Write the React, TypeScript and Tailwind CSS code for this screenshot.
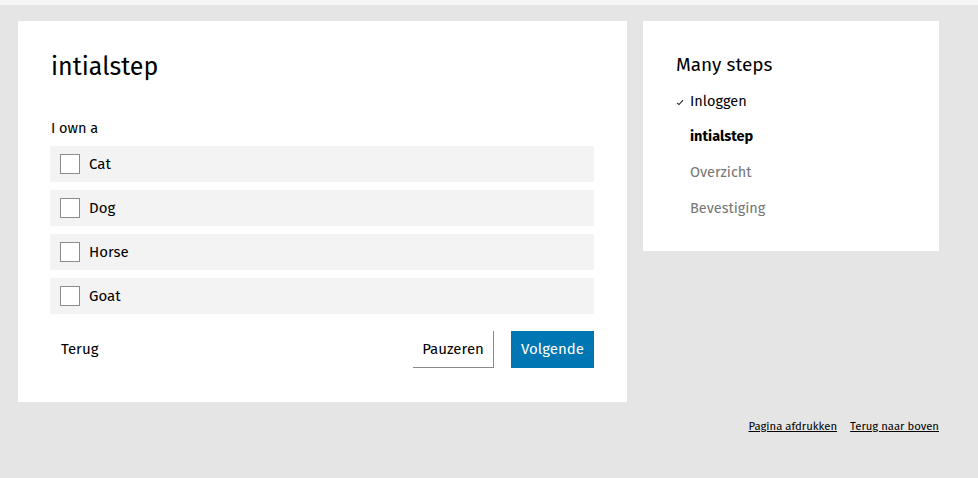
import React from "react";

const font = { fontFamily: '"Fira Sans", "Open Sans", "Noto Sans", sans-serif' };

function Row({ label }: { label: string }) {
  return (
    <label className="flex h-[36px] items-center bg-[#f3f3f3] pl-[10px]">
      <span className="h-[20px] w-[20px] border border-[#8c8c8c] bg-white" />
      <span className="ml-[9px] text-[15px] text-black">{label}</span>
    </label>
  );
}

export default function App() {
  return (
    <div style={font} className="min-h-[478px] bg-[#e5e5e5] border-t-[5px] border-[#f5f5f5]">
      <div className="flex gap-[16px] px-[18px] pt-[16px]">
        <div className="w-[609px] bg-white pl-[32px] pr-[33px] pt-[30px] pb-[34px]">
          <h1 className="ml-[1px] text-[25px] leading-[32px] text-black">intialstep</h1>
          <div className="ml-[1px] mt-[34px] text-[14.5px] leading-[22px] text-black">I own a</div>
          <div className="mt-[7px] flex flex-col gap-[8px]">
            <Row label="Cat" />
            <Row label="Dog" />
            <Row label="Horse" />
            <Row label="Goat" />
          </div>
          <div className="mt-[17px] flex items-center">
            <button className="pl-[11px] text-[15px] text-black">Terug</button>
            <div className="ml-auto flex gap-[17px]">
              <button className="h-[37px] w-[81px] border-r border-b border-[#8a8a8a] bg-white text-[15px] text-black">
                Pauzeren
              </button>
              <button className="h-[37px] w-[83px] bg-[#0076b2] text-[15px] text-white">
                Volgende
              </button>
            </div>
          </div>
        </div>
        <div className="h-[230px] w-[296px] bg-white pl-[33px] pt-[31px]">
          <h2 className="text-[19px] leading-[26px] text-black">Many steps</h2>
          <ul className="mt-[12px] text-[14.5px]">
            <li className="relative flex h-[24px] items-center pl-[14px] text-black">
              <svg className="absolute left-0 top-[9px]" width="8" height="7" viewBox="0 0 8 7" fill="none">
                <path d="M1 3.8 L3 5.6 L7 1.2" stroke="#222" strokeWidth="1.1" />
              </svg>
              Inloggen
            </li>
            <li className="mt-[11px] flex h-[24px] items-center pl-[14px] font-bold text-black">intialstep</li>
            <li className="mt-[12px] flex h-[24px] items-center pl-[14px] text-[#767676]">Overzicht</li>
            <li className="mt-[12px] flex h-[24px] items-center pl-[14px] text-[#767676]">Bevestiging</li>
          </ul>
        </div>
      </div>
      <div className="flex justify-end gap-[13px] pr-[39px] pt-[16px] text-[11.3px] text-black">
        <a className="underline" href="#">Pagina afdrukken</a>
        <a className="underline" href="#">Terug naar boven</a>
      </div>
    </div>
  );
}
